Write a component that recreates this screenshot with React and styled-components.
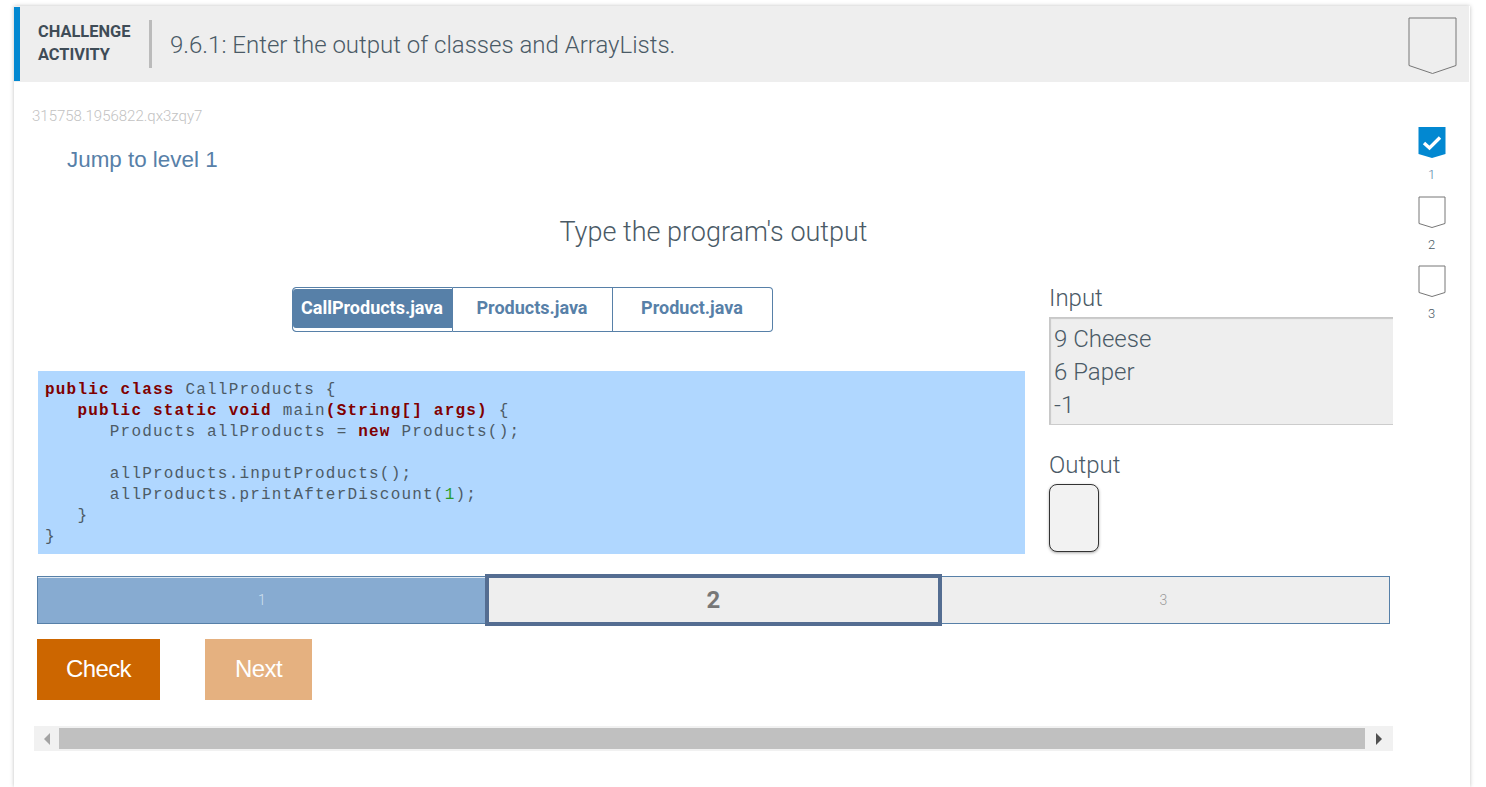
import React from 'react';
import styled, { createGlobalStyle } from 'styled-components';

const colorLink = '#5780a8';
const colorText = '#4a5a66';
const colorBlue = '#0288d1';

const GlobalStyle = createGlobalStyle`
    html, body {
        margin: 0;
        height: 100%;
        overflow: hidden;
        background: #fff;
        font-family: Roboto, "Liberation Sans", sans-serif;
        color: ${colorText};
    }
`;

const Card = styled.div`
    margin: 6px 16px 0 14px;
    height: 781px;
    box-shadow: 0 0 4px rgba(0, 0, 0, 0.25);
    background: #fff;
`;

const Header = styled.header`
    display: flex;
    align-items: center;
    height: 76px;
    margin-right: 1px;
    background: #eee;
`;

const Stripe = styled.div`
    align-self: stretch;
    width: 6px;
    margin: 1px 0;
    background: ${colorBlue};
`;

const Kicker = styled.div`
    width: 111px;
    margin: 0 0 2px 18px;
    font-size: 16.4px;
    font-weight: 700;
    line-height: 23px;
    color: #3f4c57;
`;

const Divider = styled.div`
    width: 3px;
    height: 48px;
    background: #bbb;
`;

const Title = styled.h1`
    flex: 1;
    margin: 2px 0 0 18px;
    font-size: 24px;
    font-weight: 300;
    line-height: 32px;
`;

const HeaderBadge = styled.svg`
    width: 50px;
    height: 58px;
    margin: 4px 11px 0 0;
`;

const Body = styled.div`
    display: flex;
`;

const Main = styled.main`
    width: 1359px;
    margin-left: 20px;
`;

const ActivityId = styled.div`
    margin: 24px 0 0 -2px;
    font-size: 15px;
    font-weight: 300;
    line-height: 20px;
    color: #c2c2c2;
`;

const JumpLink = styled.div`
    margin: 19px 0 0 33px;
    font-family: "Liberation Sans", Arial, sans-serif;
    font-size: 22.4px;
    line-height: 30px;
    color: ${colorLink};
`;

const Prompt = styled.h2`
    margin: 39px 0 0;
    text-align: center;
    font-size: 27px;
    font-weight: 300;
    line-height: 36px;
`;

const Workspace = styled.div`
    display: flex;
    margin: 37px 0 0 4px;
`;

const CodeColumn = styled.div`
    width: 987px;
`;

const Tabs = styled.div`
    display: flex;
    justify-content: center;
    margin: 0 0 39px 1px;
`;

const Tab = styled.div`
    box-sizing: border-box;
    width: ${props => props.width}px;
    height: 45px;
    display: flex;
    align-items: center;
    justify-content: center;
    padding-bottom: 4px;
    border: 1px solid ${colorLink};
    border-left-width: ${props => props.first ? '1px' : '0'};
    border-radius: ${props => props.radius};
    font-size: 18px;
    font-weight: 700;
    color: ${props => props.active ? '#fff' : colorLink};
    background: ${props => props.active ? colorLink : '#fff'};
    box-shadow: ${props => props.active ? 'inset 0 1px 0 #fff, inset 0 -3px 0 #fff' : 'none'};
`;

const CodeBlock = styled.pre`
    box-sizing: border-box;
    height: 183px;
    margin: 0;
    padding: 9px 7px 0;
    background: #b0d7ff;
    font-family: "Liberation Mono", "Courier New", monospace;
    font-size: 16px;
    letter-spacing: 1.2px;
    line-height: 21px;
    color: #4d5b66;
`;

const Keyword = styled.span`
    font-weight: 700;
    color: #800000;
`;

const NumberLiteral = styled.span`
    color: #2a9d2a;
`;

const IoColumn = styled.div`
    flex: 1;
    margin-left: 24px;
`;

const IoLabel = styled.div`
    margin-top: ${props => props.top}px;
    font-size: 24px;
    font-weight: 300;
    line-height: 24px;
`;

const InputBox = styled.div`
    box-sizing: border-box;
    height: 108px;
    margin-top: 7px;
    padding: 6px 0 0 5px;
    background: #eee;
    border-bottom: 1px solid #ccc;
    box-shadow: inset 2px 2px 1px #c8c8c8;
    font-size: 24px;
    font-weight: 300;
    line-height: 33px;
`;

const OutputBox = styled.div`
    box-sizing: border-box;
    width: 50px;
    height: 68px;
    margin-top: 7px;
    border: 1px solid #333;
    border-radius: 8px;
    background: #f2f2f2;
    box-shadow: 0 1px 3px rgba(0, 0, 0, 0.35);
`;

const LevelBar = styled.div`
    display: flex;
    align-items: center;
    margin: 20px 0 0 3px;
    width: 1353px;
    height: 52px;
`;

const LevelSegment = styled.div`
    box-sizing: border-box;
    flex: none;
    height: ${props => props.current ? '52px' : '48px'};
    width: ${props => props.width}px;
    margin-left: ${props => props.overlap || 0}px;
    position: ${props => props.current ? 'relative' : 'static'};
    display: flex;
    align-items: center;
    justify-content: center;
    border: ${props => props.current ? '4px solid #546d91' : `1px solid ${colorLink}`};
    background: ${props => props.done ? '#87abd1' : '#eee'};
    box-shadow: ${props => props.done ? 'inset 0 1px 0 #dfe8f2' : 'none'};
    font-size: ${props => props.current ? '24px' : '14px'};
    font-weight: ${props => props.current ? 700 : 300};
    color: ${props => props.current ? '#777' : props.done ? '#cfe0f0' : '#999'};
`;

const Actions = styled.div`
    display: flex;
    gap: 45px;
    margin: 13px 0 0 3px;
`;

const ActionButton = styled.button`
    box-sizing: border-box;
    width: ${props => props.width}px;
    height: 61px;
    padding: 0 0 2px;
    border: 0;
    background: ${props => props.disabled ? '#e5b180' : '#cc6600'};
    color: #fff;
    font-family: "Liberation Sans", Arial, sans-serif;
    font-size: 24px;
    letter-spacing: -0.6px;
`;

const ScrollBar = styled.div`
    display: flex;
    align-items: center;
    height: 25px;
    margin-top: 26px;
    background: #f1f1f1;
`;

const ScrollArrow = styled.div`
    width: ${props => props.width}px;
    flex: none;
    display: flex;
    justify-content: center;
`;

const ScrollThumb = styled.div`
    flex: 1;
    height: 21px;
    background: #c0c0c0;
`;

const LevelRail = styled.aside`
    display: flex;
    flex-direction: column;
    align-items: center;
    width: 77px;
    padding-top: 45px;
    gap: 8px;
`;

const LevelMarker = styled.div`
    display: flex;
    flex-direction: column;
    align-items: center;
    height: 61px;
    font-size: 13px;
    font-weight: 300;
    color: ${props => props.done ? colorLink : colorText};
`;

const MarkerNumber = styled.div`
    margin-top: 8px;
    line-height: 16px;
`;

const EmptyBadge = () => (
    <svg viewBox="0 0 28 33" width="28" height="33">
        <path d="M1 1H27V27.5L14 31.5L1 27.5Z" fill="none" stroke="#777" strokeWidth="1" />
    </svg>
);

const DoneBadge = () => (
    <svg viewBox="0 0 28 32" width="28" height="32">
        <path d="M0.5 0H27.5V27L14 31L0.5 27Z" fill={colorBlue} />
        <path d="M6 16L11.5 21L22 10.5" fill="none" stroke="#fff" strokeWidth="3.4" />
    </svg>
);

const LeftArrow = () => (
    <svg viewBox="0 0 6 12" width="6" height="12"><path d="M6 0V12L0 6Z" fill="#a3a3a3" /></svg>
);

const RightArrow = () => (
    <svg viewBox="0 0 6 12" width="6" height="12"><path d="M0 0V12L6 6Z" fill="#505050" /></svg>
);

const App = () => (
    <>
        <GlobalStyle />
        <Card>
            <Header>
                <Stripe />
                <Kicker>CHALLENGE<br />ACTIVITY</Kicker>
                <Divider />
                <Title>9.6.1: Enter the output of classes and ArrayLists.</Title>
                <HeaderBadge viewBox="0 0 50 58">
                    <path d="M1 1H48V48.5L24.5 56.5L1 48.5Z" fill="none" stroke="#777" strokeWidth="1" />
                </HeaderBadge>
            </Header>
            <Body>
                <Main>
                    <ActivityId>315758.1956822.qx3zqy7</ActivityId>
                    <JumpLink>Jump to level 1</JumpLink>
                    <Prompt>Type the program's output</Prompt>
                    <Workspace>
                        <CodeColumn>
                            <Tabs>
                                <Tab active first width={161} radius="4px 0 0 4px">CallProducts.java</Tab>
                                <Tab width={160} radius="0">Products.java</Tab>
                                <Tab width={160} radius="0 4px 4px 0">Product.java</Tab>
                            </Tabs>
                            <CodeBlock>
                                <Keyword>public class</Keyword> CallProducts {'{'}{'\n'}
                                {'   '}<Keyword>public static void</Keyword> main<Keyword>(String[] args)</Keyword> {'{'}{'\n'}
                                {'      '}Products allProducts = <Keyword>new</Keyword> Products();{'\n'}
                                {'\n'}
                                {'      '}allProducts.inputProducts();{'\n'}
                                {'      '}allProducts.printAfterDiscount(<NumberLiteral>1</NumberLiteral>);{'\n'}
                                {'   '}{'}'}{'\n'}
                                {'}'}
                            </CodeBlock>
                        </CodeColumn>
                        <IoColumn>
                            <IoLabel top={-1}>Input</IoLabel>
                            <InputBox>9 Cheese<br />6 Paper<br />-1</InputBox>
                            <IoLabel top={28}>Output</IoLabel>
                            <OutputBox />
                        </IoColumn>
                    </Workspace>
                    <LevelBar>
                        <LevelSegment done width={450}>1</LevelSegment>
                        <LevelSegment current width={457} overlap={-2}>2</LevelSegment>
                        <LevelSegment width={453} overlap={-5}>3</LevelSegment>
                    </LevelBar>
                    <Actions>
                        <ActionButton width={123}>Check</ActionButton>
                        <ActionButton disabled width={107}>Next</ActionButton>
                    </Actions>
                    <ScrollBar>
                        <ScrollArrow width={25}><LeftArrow /></ScrollArrow>
                        <ScrollThumb />
                        <ScrollArrow width={28}><RightArrow /></ScrollArrow>
                    </ScrollBar>
                </Main>
                <LevelRail>
                    <LevelMarker done><DoneBadge /><MarkerNumber>1</MarkerNumber></LevelMarker>
                    <LevelMarker><EmptyBadge /><MarkerNumber>2</MarkerNumber></LevelMarker>
                    <LevelMarker><EmptyBadge /><MarkerNumber>3</MarkerNumber></LevelMarker>
                </LevelRail>
            </Body>
        </Card>
    </>
);

export default App;
